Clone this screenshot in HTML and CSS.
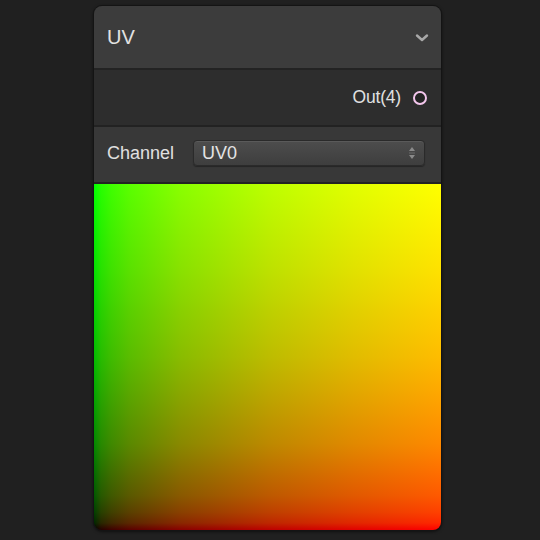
FILE: index.html
```html
<!DOCTYPE html>
<html>
<head>
<meta charset="utf-8">
<link rel="stylesheet" href="styles.css">
</head>
<body>
<div class="node">
  <div class="header">
    <span class="title">UV</span>
    <svg class="chev" width="14" height="10" viewBox="0 0 14 10"><path d="M2 2.5 L7 7 L12 2.5" fill="none" stroke="#a8a8a8" stroke-width="2.4" stroke-linecap="round" stroke-linejoin="round"/></svg>
  </div>
  <div class="outrow">
    <span class="outlabel">Out(4)</span>
    <span class="port"></span>
  </div>
  <div class="chanrow">
    <span class="chanlabel">Channel</span>
    <div class="select">
      <span class="selval">UV0</span>
      <svg class="updown" width="8" height="14" viewBox="0 0 8 14"><path d="M4 1 L7 5 L1 5 Z" fill="#8a8a8a"/><path d="M4 13 L7 9 L1 9 Z" fill="#8a8a8a"/><rect x="1" y="6.5" width="6" height="1" fill="#6a6a6a"/></svg>
    </div>
  </div>
  <div class="preview"></div>
</div>
</body>
</html>
```
FILE: styles.css
```css
html, body {
  margin: 0;
  padding: 0;
  background: #202020;
  width: 540px;
  height: 540px;
  overflow: hidden;
  font-family: "Liberation Sans", Arial, sans-serif;
}
body {
  padding-top: 5px;
  box-sizing: border-box;
}
.node {
  margin-left: 93px;
  width: 347px;
  border: 1px solid #141414;
  border-radius: 9px;
  background: #1a1a1a;
  overflow: hidden;
  display: flex;
  flex-direction: column;
  box-shadow: 0 1px 3px rgba(0,0,0,0.5);
}
.header {
  height: 62px;
  background: #3c3c3c;
  display: flex;
  align-items: center;
  justify-content: space-between;
  padding: 0 12px 0 13px;
  border-bottom: 2px solid #232323;
}
.title {
  color: #e2e2e2;
  font-size: 20px;
}
.chev {
  margin-top: 2px;
}
.outrow {
  height: 55px;
  background: #2d2d2d;
  display: flex;
  align-items: center;
  justify-content: flex-end;
  padding-right: 14px;
  border-bottom: 2px solid #222222;
}
.outlabel {
  color: #e0e0e0;
  font-size: 17.5px;
  letter-spacing: -0.2px;
  margin-right: 12px;
}
.port {
  width: 10px;
  height: 10px;
  border: 2px solid #f3c6ec;
  border-radius: 50%;
  background: #242424;
}
.chanrow {
  height: 55px;
  background: #383838;
  display: flex;
  align-items: center;
  padding: 0 16px 3px 13px;
  box-sizing: border-box;
  height: 57px;
  border-bottom: 2px solid #232323;
}
.chanlabel {
  color: #e0e0e0;
  font-size: 18px;
  width: 86px;
}
.select {
  flex: 1;
  height: 24px;
  border: 1px solid #2a2a2a;
  border-radius: 4px;
  background: linear-gradient(#4d4d4d, #3e3e3e);
  box-shadow: inset 0 1px 0 #5a5a5a, 0 1px 1px rgba(0,0,0,0.35);
  display: flex;
  align-items: center;
  justify-content: space-between;
  padding: 0 8px 0 8px;
}
.selval {
  color: #e4e4e4;
  font-size: 18px;
}
.preview {
  height: 346px;
  background-image:
    linear-gradient(to right, #000 0%, #270000 2%, #3f0000 5%, #590000 10%, #890000 25%, #bc0000 50%, #e10000 75%, #f00 100%),
    linear-gradient(to bottom, #0f0 0%, #00e100 25%, #00bc00 50%, #008900 75%, #005900 90%, #003f00 95%, #002700 98%, #000 100%);
  background-blend-mode: screen;
}
```
